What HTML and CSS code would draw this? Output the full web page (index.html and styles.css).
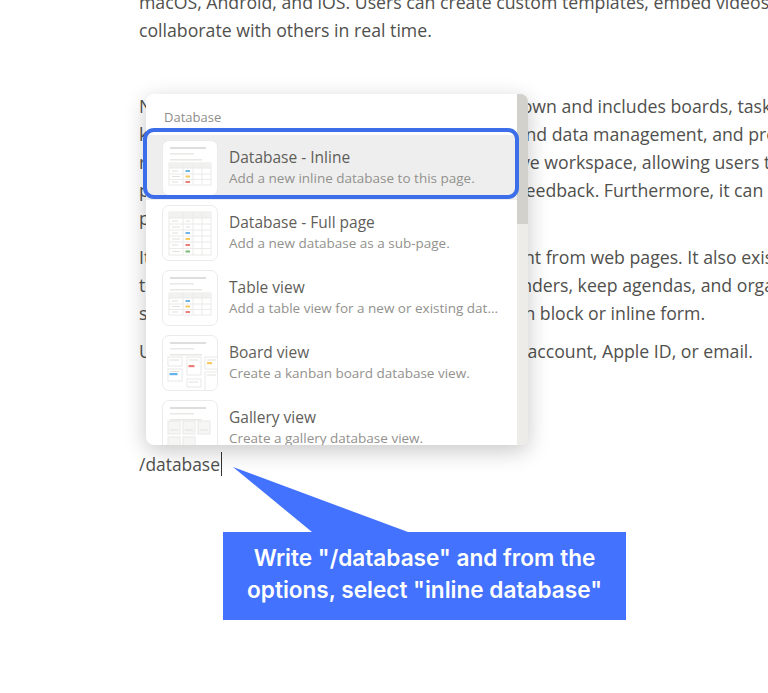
FILE: index.html
```html
<!DOCTYPE html>
<html lang="en">
<head>
    <meta charset="UTF-8">
    <title>Inline database</title>
    <link rel="stylesheet" href="styles.css">
</head>
<body>
    <svg class="icon-defs" width="0" height="0">
        <defs>
            <g id="head-lines">
                <rect x="8" y="7" width="36" height="2" fill="#d9d9d7"/>
                <rect x="8" y="13" width="24" height="1.5" fill="#e4e4e2"/>
                <rect x="8" y="19" width="32" height="1.5" fill="#e4e4e2"/>
            </g>
            <g id="small-table">
                <rect x="7" y="23" width="42" height="22" fill="#fff" stroke="#e8e8e6"/>
                <rect x="7" y="23" width="42" height="5" fill="#efefed"/>
                <path d="M21 23V45M31 23V45M40 23V45M7 28H49M7 34H49M7 39.5H49" stroke="#e8e8e6" fill="none"/>
                <rect x="10" y="30.5" width="6" height="1" fill="#dcdcda"/>
                <rect x="10" y="36" width="8" height="1" fill="#dcdcda"/>
                <rect x="10" y="41.5" width="6" height="1" fill="#dcdcda"/>
                <rect x="23.5" y="30" width="4.5" height="2" fill="#5aa7e0"/>
                <rect x="23.5" y="35.5" width="4.5" height="2" fill="#f6c244"/>
                <rect x="23.5" y="41" width="4.5" height="2" fill="#e86a64"/>
            </g>
        </defs>
    </svg>

    <main class="page">
        <div class="text-block top-block">
            <p>macOS, Android, and iOS. Users can create custom templates, embed videos, and</p>
            <p>collaborate with others in real time.</p>
        </div>

        <div class="text-block middle-block">
            <p>Notion uses the syntax that is similar to Markdown and includes boards, tasks, wikis,</p>
            <p>knowledge bases, note-taking, our to-do lists, and data management, and provides a</p>
            <p>reliable, flexible, shared, and highly collaborative workspace, allowing users to share</p>
            <p>pages with all of their classmates, then collect feedback. Furthermore, it can be</p>
            <p>published.</p>
        </div>
        <div class="text-block gap-block">
            <p>It offers a free web clipper to save useful content from web pages. It also exists as</p>
            <p>templates to track your projects, set daily reminders, keep agendas, and organize</p>
            <p>schedules, adding new databases in full-page, in block or inline form.</p>
        </div>
        <div class="text-block last-block">
            <p>Users can sign up and log in using your Google account, Apple ID, or email.</p>
        </div>

        <div class="command-line">
            <span class="command-text">/database</span>
        </div>

        <div class="callout">
            <svg class="callout-tail" width="180" height="68" viewBox="0 0 180 68">
                <polygon points="0,0 175,65 79,65" fill="#4272fe"/>
            </svg>
            <p>Write "/database" and from the</p>
            <p>options, select "inline database"</p>
        </div>
    </main>

    <div class="menu">
        <div class="menu-list">
            <div class="menu-label">Database</div>

            <div class="menu-item active">
                <div class="thumb">
                    <svg width="56" height="56" viewBox="0 0 56 56"><use href="#head-lines"/><use href="#small-table"/></svg>
                </div>
                <div class="item-text">
                    <div class="item-title">Database - Inline</div>
                    <div class="item-desc">Add a new inline database to this page.</div>
                </div>
            </div>

            <div class="menu-item">
                <div class="thumb">
                    <svg width="56" height="56" viewBox="0 0 56 56">
                        <rect x="7" y="7" width="42" height="43" fill="#fff" stroke="#e8e8e6"/>
                        <rect x="7" y="7" width="42" height="6" fill="#efefed"/>
                        <path d="M21 7V50M31 7V50M40 7V50M7 13H49M7 19H49M7 25H49M7 31H49M7 37H49M7 43.5H49" stroke="#e8e8e6" fill="none"/>
                        <path d="M10 16H16M10 22H18M10 28H16M10 34H18M10 40H16M10 46.5H18M24 16H28M24 22H28" stroke="#dcdcda"/>
                        <rect x="23.5" y="27" width="4.5" height="2" fill="#5aa7e0"/>
                        <rect x="23.5" y="33" width="4.5" height="2" fill="#f6c244"/>
                        <rect x="23.5" y="39" width="4.5" height="2" fill="#e86a64"/>
                        <rect x="23.5" y="45.5" width="4.5" height="2" fill="#62b05f"/>
                    </svg>
                </div>
                <div class="item-text">
                    <div class="item-title">Database - Full page</div>
                    <div class="item-desc">Add a new database as a sub-page.</div>
                </div>
            </div>

            <div class="menu-item">
                <div class="thumb">
                    <svg width="56" height="56" viewBox="0 0 56 56"><use href="#head-lines"/><use href="#small-table"/></svg>
                </div>
                <div class="item-text">
                    <div class="item-title">Table view</div>
                    <div class="item-desc">Add a table view for a new or existing dat...</div>
                </div>
            </div>

            <div class="menu-item">
                <div class="thumb">
                    <svg width="56" height="56" viewBox="0 0 56 56">
                        <use href="#head-lines"/>
                        <g fill="#fff" stroke="#e6e6e4">
                            <rect x="6" y="22" width="14" height="9"/>
                            <rect x="25" y="22" width="14" height="18"/>
                            <rect x="43" y="22" width="14" height="12"/>
                            <rect x="6" y="34" width="14" height="12"/>
                            <rect x="25" y="44" width="14" height="8"/>
                            <rect x="43" y="37" width="14" height="20"/>
                        </g>
                        <path d="M8 25H17M27 25H36M45 25H54M8 36.5H17M27 47H36M45 40H54" stroke="#dcdcda"/>
                        <rect x="26.5" y="30" width="6" height="2.2" fill="#e86a64"/>
                        <rect x="45" y="27" width="5" height="2.2" fill="#f6c244"/>
                        <rect x="7.5" y="38" width="8" height="2.2" fill="#4aa8e8"/>
                    </svg>
                </div>
                <div class="item-text">
                    <div class="item-title">Board view</div>
                    <div class="item-desc">Create a kanban board database view.</div>
                </div>
            </div>

            <div class="menu-item">
                <div class="thumb">
                    <svg width="56" height="56" viewBox="0 0 56 56">
                        <use href="#head-lines"/>
                        <g fill="#f5f5f4" stroke="#e6e6e4">
                            <rect x="6" y="21" width="12" height="13"/>
                            <rect x="21" y="21" width="12" height="13"/>
                            <rect x="36" y="21" width="12" height="13"/>
                            <rect x="6" y="37" width="12" height="13"/>
                            <rect x="21" y="37" width="12" height="13"/>
                        </g>
                        <path d="M8 30H16M23 30H31M38 30H46" stroke="#dcdcda"/>
                    </svg>
                </div>
                <div class="item-text">
                    <div class="item-title">Gallery view</div>
                    <div class="item-desc">Create a gallery database view.</div>
                </div>
            </div>
        </div>
        <div class="scrollbar"><div class="scroll-thumb"></div></div>
    </div>
</body>
</html>
```

FILE: styles.css
```css
html, body {
    margin: 0;
    height: 693px;
    overflow: hidden;
    background-color: #fff;
}
body {
    position: relative;
    font-family: "Open Sans", "Noto Sans", sans-serif;
    color: #50504d;
}
.icon-defs {
    display: block;
    height: 0;
}
.page {
    padding-left: 139px;
    margin-top: -12px;
}
.text-block {
    overflow: hidden;
}
.text-block p {
    margin: 0;
    font-size: 17.7px;
    line-height: 28px;
    white-space: nowrap;
}
.middle-block {
    margin-top: 48px;
}
.gap-block {
    margin-top: 11px;
}
.last-block {
    margin-top: 10px;
}
.command-line {
    margin-top: 87px;
    font-size: 17.4px;
    line-height: 24px;
    height: 24px;
}
.command-text {
    display: inline-block;
    border-right: 1px solid #333;
    padding-right: 1px;
}
.callout {
    position: relative;
    box-sizing: border-box;
    margin: 56px 0 0 84px;
    width: 403px;
    height: 88px;
    padding-top: 10px;
    background-color: #4272fe;
    color: #fff;
    text-align: center;
    font-family: Inter, sans-serif;
    font-weight: 600;
}
.callout p {
    margin: 0;
    font-size: 22.6px;
    line-height: 32px;
    white-space: nowrap;
}
.callout-tail {
    position: absolute;
    left: 10px;
    top: -65px;
}

/* slash command popup */
.menu {
    position: absolute;
    left: 146px;
    top: 94px;
    width: 382px;
    height: 351px;
    display: flex;
    background-color: #fff;
    border-radius: 8px;
    box-shadow: 0 6px 22px rgba(0, 0, 0, 0.22);
}
.menu-list {
    flex: 1;
    min-width: 0;
    height: 351px;
    border-radius: 8px 0 0 8px;
    overflow: hidden;
}
.menu-label {
    padding: 14px 0 0 18px;
    height: 27px;
    font-size: 13px;
    line-height: 18px;
    color: #8f8e8a;
}
.menu-item {
    display: flex;
    align-items: center;
    gap: 11px;
    height: 65px;
    padding-left: 16px;
}
.menu-item.active {
    background-color: #eee;
}
.menu-item.active::after {
    content: "";
    position: absolute;
    left: -3px;
    width: 376px;
    top: 34px;
    height: 71px;
    box-sizing: border-box;
    border: 4px solid #3d6ee9;
    border-radius: 11px;
}
.thumb {
    flex: none;
    box-sizing: border-box;
    width: 56px;
    height: 56px;
    background-color: #fff;
    border: 1px solid #ebebe9;
    border-radius: 7px;
    overflow: hidden;
}
.thumb svg {
    display: block;
    margin: -1px;
    opacity: 0.85;
    filter: blur(0.4px);
}
.item-title {
    font-size: 15.5px;
    line-height: 22px;
    color: #5f5e5a;
}
.item-desc {
    font-size: 13.5px;
    line-height: 21px;
    color: #92918d;
    white-space: nowrap;
}
.scrollbar {
    flex: none;
    width: 11px;
    background-color: #edece9;
    border-radius: 0 8px 8px 0;
    overflow: hidden;
}
.scroll-thumb {
    height: 130px;
    background-color: #d3d1cb;
}
```
